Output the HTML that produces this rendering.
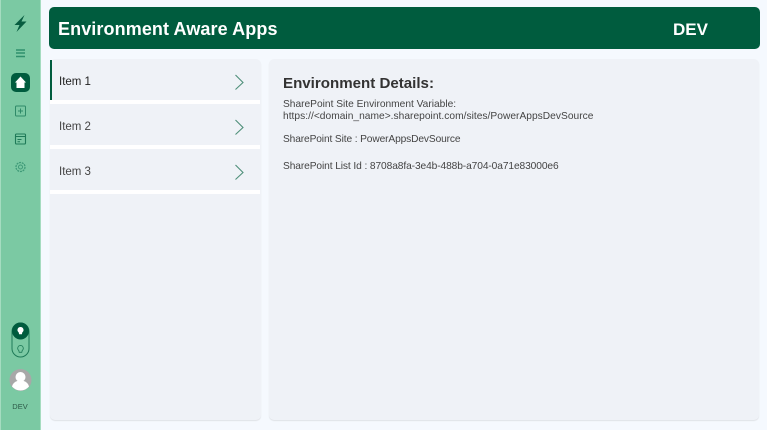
<!DOCTYPE html>
<html>
<head>
<meta charset="utf-8">
<style>
html,body{margin:0;padding:0;width:767px;height:430px;overflow:hidden;background:#f5f9fe;font-family:"Liberation Sans",sans-serif;}
.a{position:absolute;}
.t{position:absolute;white-space:nowrap;color:#444;font-size:10.2px;line-height:12px;}
.sep{position:absolute;left:50px;width:210px;height:4px;background:#fff;}
.lbl{position:absolute;left:59px;font-size:11.5px;line-height:14px;color:#444;white-space:nowrap;}
</style>
</head>
<body>
<div class="a" style="left:0;top:0;width:40px;height:430px;background:#7bc9a3;"></div>
<div class="a" style="left:0;top:0;width:1px;height:430px;background:#a5dcc0;"></div>
<div class="a" style="left:40px;top:0;width:1px;height:430px;background:#a5dcc0;"></div>

<svg class="a" style="left:0;top:0" width="41" height="430" viewBox="0 0 41 430">
  <path d="M24.500 15 L14.500 25 L19.500 25 L16.500 32 L26.500 21.500 L21.500 21.500 Z" fill="#075c40"/>
  <path d="M16 50h9M16 53h9M16 56.500h9" stroke="#2f8f6c" stroke-width="1.500" fill="none"/>
  <rect x="11" y="73" width="19" height="19" rx="5" fill="#005c3e"/>
  <path d="M20.500 76.500 L15 82.500 L16.500 82.500 L16.500 88 L24.500 88 L24.500 82.500 L26 82.500 Z" fill="#fff"/>
  <rect x="15.500" y="106" width="10" height="10" rx="1" fill="none" stroke="#2f8a68" stroke-width="1"/>
  <path d="M20.500 108.500v5M18 111h5" stroke="#2f8a68" stroke-width="1" fill="none"/>
  <rect x="15.500" y="134" width="10" height="10" rx="1" fill="none" stroke="#1f7a58" stroke-width="1.100"/>
  <path d="M15.500 136.500h10M17.500 139.500h4M17.500 141.800h2.500" stroke="#1f7a58" stroke-width="1" fill="none"/>
  <circle cx="20.500" cy="167" r="2" fill="none" stroke="#3f9a78" stroke-width="1"/>
  <circle cx="20.500" cy="167" r="4.500" fill="none" stroke="#3f9a78" stroke-width="1.300" stroke-dasharray="2 .8"/>

  <rect x="12" y="323" width="17" height="34" rx="8.500" fill="none" stroke="#1f7a58" stroke-width="1"/>
  <circle cx="20.500" cy="331" r="8.500" fill="#005c3e"/>
  <path d="M20.500 327a3 3 0 0 1 1.800 5.400l-.4 1.900h-2.800l-.4-1.900a3 3 0 0 1 1.800-5.400z" fill="#fff"/>
  <path d="M20.500 345.500a2.800 2.800 0 0 1 1.700 5l-.4 1.800h-2.600l-.4-1.800a2.800 2.800 0 0 1 1.700-5z" fill="none" stroke="#1f7a58" stroke-width=".8"/>

  <circle cx="20.500" cy="380" r="11" fill="#a8a8a8"/>
  <circle cx="20.500" cy="377" r="5" fill="#fff"/>
  <path d="M12 386.500 C13 382.500 16.500 380.500 20.500 380.500 C24.500 380.500 28 382.500 29 386.500 A11 11 0 0 1 12 386.500Z" fill="#fff"/>
</svg>
<div class="t" style="left:0;width:40px;text-align:center;top:402px;font-size:7.500px;color:#2d5a48;line-height:10px;">DEV</div>

<div class="a" style="left:49px;top:7px;width:711px;height:42px;background:#005c3e;border-radius:5px;"></div>
<div class="t" style="left:58px;top:18px;font-size:18px;line-height:22px;color:#fff;font-weight:bold;letter-spacing:.1px;">Environment Aware Apps</div>
<div class="t" style="left:673px;top:19px;font-size:17px;line-height:21px;color:#fff;font-weight:bold;">DEV</div>

<div class="a" style="left:50px;top:59px;width:211px;height:361px;background:#eff2f7;border-radius:5px;box-shadow:0 1px 1px #dfe2e6;"></div>
<div class="a" style="left:269px;top:59px;width:490px;height:361px;background:#eff2f7;border-radius:5px;box-shadow:0 1px 1px #dfe2e6;"></div>

<div class="a" style="left:50px;top:60px;width:2px;height:40px;background:#005c3e;"></div>
<div class="sep" style="top:100px;"></div>
<div class="sep" style="top:145px;"></div>
<div class="sep" style="top:190px;"></div>

<div class="lbl" style="top:75px;color:#222;">Item 1</div>
<div class="lbl" style="top:120px;">Item 2</div>
<div class="lbl" style="top:165px;">Item 3</div>

<svg class="a" style="left:230px;top:70px" width="20" height="112" viewBox="0 0 20 112">
  <path d="M5.500 5 L13 12.500 L5.500 19.500M5.500 50 L13 57.500 L5.500 64.500M5.500 95 L13 102.500 L5.500 109.500" fill="none" stroke="#4f907a" stroke-width="1.100"/>
</svg>

<div class="t" style="left:283px;top:75px;font-size:15.100px;line-height:18px;font-weight:bold;color:#333;">Environment Details:</div>
<div class="t" style="left:283px;top:99px;">SharePoint Site Environment Variable:</div>
<div class="t" style="left:283px;top:111px;letter-spacing:.03px;">https://&lt;domain_name&gt;.sharepoint.com/sites/PowerAppsDevSource</div>
<div class="t" style="left:283px;top:134px;letter-spacing:-.12px;">SharePoint Site : PowerAppsDevSource</div>
<div class="t" style="left:283px;top:161px;letter-spacing:-.095px;">SharePoint List Id : 8708a8fa-3e4b-488b-a704-0a71e83000e6</div>
</body>
</html>
